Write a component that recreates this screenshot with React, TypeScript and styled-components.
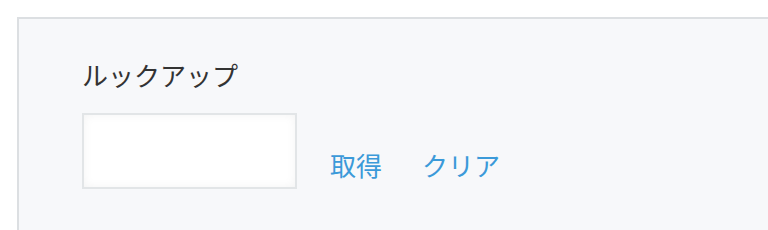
import React from 'react'
import styled, { createGlobalStyle } from 'styled-components'

const GlobalStyle = createGlobalStyle`
    html, body {
        margin: 0;
        padding: 0;
        background: #fff;
        font-family: 'Noto Sans CJK JP', 'Noto Sans', sans-serif;
    }
`

const Page = styled.div`
    padding: 17px 0 0 17px;
    height: 230px;
    box-sizing: border-box;
    overflow: hidden;
`

const Panel = styled.section`
    background: #f7f8fa;
    border-top: 2px solid #dcdfe2;
    border-left: 2px solid #dcdfe2;
    padding: 38px 0 60px 63px;
`

const Label = styled.div`
    font-size: 26px;
    line-height: 36px;
    color: #333;
    margin-bottom: 20px;
`

const Row = styled.div`
    display: flex;
    align-items: flex-end;
`

const Input = styled.input`
    width: 215px;
    height: 76px;
    box-sizing: border-box;
    border: 2px solid #e2e5e7;
    background: #fff;
    box-shadow: inset 0 0 10px rgba(0, 0, 0, 0.05);
    outline: none;
    margin: 0 33px 0 0;
    padding: 0 12px;
    font-size: 24px;
`

const LinkButton = styled.a<{ $gap?: number }>`
    font-size: 26px;
    line-height: 36px;
    color: #3b9ad9;
    text-decoration: none;
    cursor: pointer;
    margin-right: ${(p) => p.$gap ?? 0}px;
    padding-bottom: 6px;
`

export default function App() {
    return (
        <>
            <GlobalStyle />
            <Page>
                <Panel>
                    <Label>ルックアップ</Label>
                    <Row>
                        <Input type="text" />
                        <LinkButton $gap={40}>取得</LinkButton>
                        <LinkButton>クリア</LinkButton>
                    </Row>
                </Panel>
            </Page>
        </>
    )
}
